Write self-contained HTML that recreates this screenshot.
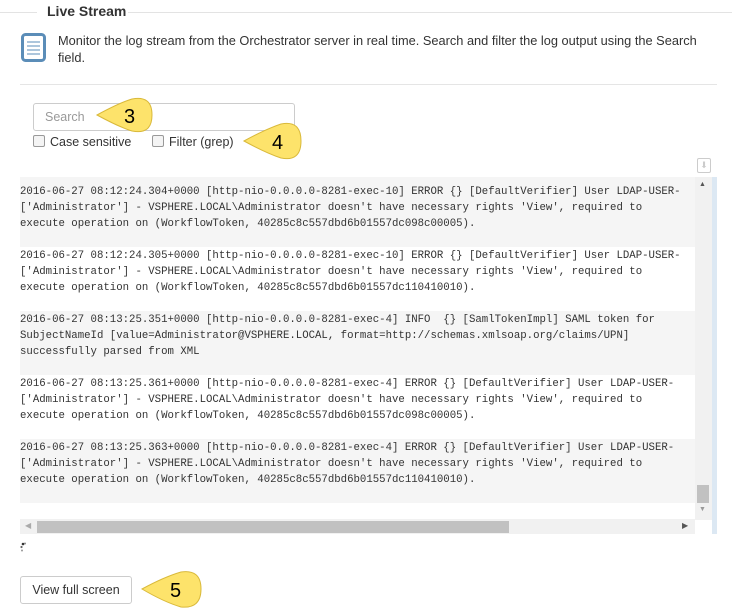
<!DOCTYPE html>
<html><head><style>
body{margin:0;width:732px;height:612px;background:#fff;font-family:"Liberation Sans",sans-serif;position:relative;overflow:hidden;color:#333}
.abs{position:absolute}
.log{position:absolute;left:20px;width:675px;top:177px;height:343px;overflow:hidden;background:#fff}
.b{height:64px;box-sizing:border-box;padding:1px 0 0 0;font-family:"Liberation Mono",monospace;font-size:10.7px;line-height:16px;white-space:pre;color:#333}
.g{background:#f5f5f5}
.cb{display:inline-block;width:10px;height:10px;border:1px solid #999;border-radius:2px;background:#f4f4f4;vertical-align:-1px;margin-right:5px}
</style></head><body>
<div class="abs" style="left:0;top:12px;width:37px;border-top:1px solid #e3e3e3"></div>
<div class="abs" style="left:128px;top:12px;width:604px;border-top:1px solid #e3e3e3"></div>
<div class="abs" style="left:47px;top:3px;font-size:14px;font-weight:bold;color:#333">Live Stream</div>
<svg class="abs" style="left:21px;top:33px" width="25" height="29"><rect x="1.5" y="1.5" width="22" height="26" rx="3" fill="#fff" stroke="#5b8db8" stroke-width="3"/><path d="M6 9h13M6 13h13M6 17h13M6 21h13" stroke="#5b8db8" stroke-width="1"/></svg>
<div class="abs" style="left:58px;top:32px;width:650px;font-size:12.8px;line-height:17px;color:#333">Monitor the log stream from the Orchestrator server in real time. Search and filter the log output using the Search field.</div>
<div class="abs" style="left:20px;top:84px;width:697px;border-top:1px solid #e5e5e5"></div>
<div class="abs" style="left:33px;top:103px;width:262px;height:28px;border:1px solid #ccc;border-radius:3px;box-sizing:border-box"></div>
<div class="abs" style="left:45px;top:110px;font-size:12.5px;color:#999">Search</div>
<div class="abs" style="left:33px;top:135px;font-size:12.5px;color:#333"><span class="cb"></span>Case sensitive</div>
<div class="abs" style="left:152px;top:135px;font-size:12.5px;color:#333"><span class="cb"></span>Filter (grep)</div>
<svg class="abs" style="left:94px;top:95px" width="62" height="40"><path d="M3 20 Q25 8 38 4 Q58 0 58 20 Q58 40 38 36 Q25 32 3 20Z" fill="#fde36b" stroke="#d9b93a" stroke-width="1"/><text x="30" y="28" font-size="20" font-family="Liberation Sans" fill="#000">3</text></svg>
<svg class="abs" style="left:241px;top:120px" width="64" height="42"><path d="M3 21 Q25 9 40 4 Q60 0 60 21 Q60 42 40 38 Q25 33 3 21Z" fill="#fde36b" stroke="#d9b93a" stroke-width="1"/><text x="31" y="29" font-size="20" font-family="Liberation Sans" fill="#000">4</text></svg>
<div class="abs" style="left:697px;top:158px;width:14px;height:15px;border:1px solid #ccc;border-radius:2px;box-sizing:border-box;color:#ccc;font-size:9px;text-align:center;line-height:13px">&#x2B07;</div>
<div class="log">
<div class="g" style="height:6px"></div>
<div class="b g">2016-06-27 08:12:24.304+0000 [http-nio-0.0.0.0-8281-exec-10] ERROR {} [DefaultVerifier] User LDAP-USER-
['Administrator'] - VSPHERE.LOCAL\Administrator doesn't have necessary rights 'View', required to
execute operation on (WorkflowToken, 40285c8c557dbd6b01557dc098c00005).</div>
<div class="b">2016-06-27 08:12:24.305+0000 [http-nio-0.0.0.0-8281-exec-10] ERROR {} [DefaultVerifier] User LDAP-USER-
['Administrator'] - VSPHERE.LOCAL\Administrator doesn't have necessary rights 'View', required to
execute operation on (WorkflowToken, 40285c8c557dbd6b01557dc110410010).</div>
<div class="b g">2016-06-27 08:13:25.351+0000 [http-nio-0.0.0.0-8281-exec-4] INFO  {} [SamlTokenImpl] SAML token for
SubjectNameId [value=Administrator@VSPHERE.LOCAL, format=http://schemas.xmlsoap.org/claims/UPN]
successfully parsed from XML</div>
<div class="b">2016-06-27 08:13:25.361+0000 [http-nio-0.0.0.0-8281-exec-4] ERROR {} [DefaultVerifier] User LDAP-USER-
['Administrator'] - VSPHERE.LOCAL\Administrator doesn't have necessary rights 'View', required to
execute operation on (WorkflowToken, 40285c8c557dbd6b01557dc098c00005).</div>
<div class="b g">2016-06-27 08:13:25.363+0000 [http-nio-0.0.0.0-8281-exec-4] ERROR {} [DefaultVerifier] User LDAP-USER-
['Administrator'] - VSPHERE.LOCAL\Administrator doesn't have necessary rights 'View', required to
execute operation on (WorkflowToken, 40285c8c557dbd6b01557dc110410010).</div>
</div>
<div class="abs" style="left:695px;top:177px;width:17px;height:343px;background:#f1f1f1"></div>
<div class="abs" style="left:699px;top:181px;font-size:7px;color:#555">&#9650;</div>
<div class="abs" style="left:697px;top:485px;width:12px;height:18px;background:#c1c1c1"></div>
<div class="abs" style="left:699px;top:506px;font-size:7px;color:#999">&#9660;</div>
<div class="abs" style="left:712px;top:177px;width:5px;height:357px;background:#dce8f3"></div>
<div class="abs" style="left:20px;top:519px;width:675px;height:15px;background:#f1f1f1"></div>
<div class="abs" style="left:37px;top:521px;width:472px;height:12px;background:#c1c1c1"></div>
<div class="abs" style="left:25px;top:521px;font-size:8px;color:#aaa">&#9664;</div>
<div class="abs" style="left:682px;top:521px;font-size:8px;color:#555">&#9654;</div>
<svg class="abs" style="left:20px;top:542px" width="10" height="12"><circle cx="3" cy="2" r="1.3" fill="#333"/><circle cx="1.5" cy="5" r="1.1" fill="#666"/><circle cx="2" cy="8.5" r="1" fill="#999"/><circle cx="5" cy="1.5" r="1" fill="#888"/></svg>
<div class="abs" style="left:20px;top:576px;width:112px;height:28px;border:1px solid #ccc;border-radius:3px;box-sizing:border-box;font-size:12.5px;text-align:center;line-height:26px;color:#333">View full screen</div>
<svg class="abs" style="left:139px;top:569px" width="66" height="42"><path d="M3 20 Q25 8 42 3 Q62 0 62 20 Q62 40 42 38 Q25 33 3 20Z" fill="#fde36b" stroke="#d9b93a" stroke-width="1"/><text x="31" y="28" font-size="20" font-family="Liberation Sans" fill="#000">5</text></svg>
</body></html>
